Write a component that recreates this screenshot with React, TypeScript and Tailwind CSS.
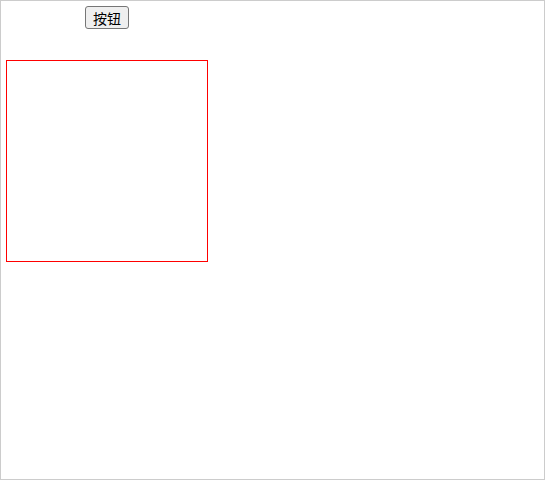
import React from "react";

export default function App() {
  return (
    <div className="w-[546px] h-[481px] bg-white">
      <div
        className="w-[545px] h-[480px] border border-[#cccccc] p-[5px] flex flex-col"
        style={{ fontFamily: '"Noto Sans CJK SC", "Liberation Sans", sans-serif' }}
      >
        <div className="w-[202px] flex justify-center">
          <button className="h-[23px] px-[7px] border border-[#767676] bg-[#efefef] rounded-[3px] text-[14px] leading-none text-black">
            按钮
          </button>
        </div>
        <div className="mt-[31px] w-[202px] h-[202px] border border-[#ff0000]" />
      </div>
    </div>
  );
}
